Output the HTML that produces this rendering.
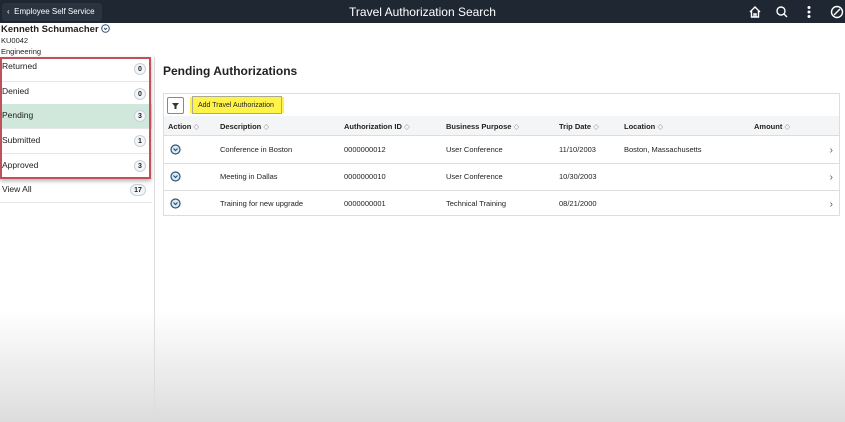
<!DOCTYPE html>
<html><head><meta charset="utf-8"><style>
*{margin:0;padding:0;box-sizing:border-box}
body{width:845px;height:422px;overflow:hidden;font-family:"Liberation Sans",sans-serif;color:#222;position:relative;background:linear-gradient(#fff 0,#fff 310px,#e8e8e8 385px,#dcdcdc 422px)}
.hdr{position:absolute;left:0;top:0;width:845px;height:23px;background:#1f2733;color:#fff}
.back{position:absolute;left:2px;top:3px;width:100px;height:18px;background:#2a3340;border-radius:3px;font-size:8px;line-height:18px;padding-left:5px}
.title{position:absolute;left:0;width:845px;text-align:center;top:5px;font-size:12px}
.user{position:absolute;left:1px;top:24px;font-size:9px;line-height:10px}
.side{position:absolute;left:0;top:57px;width:155px;height:365px;border-right:1px solid #ddd}
.it{position:absolute;left:0;width:152px;height:25px;font-size:8.5px;padding:4px 0 0 2px;border-bottom:1px solid #e6e6e6}
.bd{position:absolute;right:6px;top:6px;width:12px;height:12px;border-radius:50%;border:1px solid #c8d0d8;background:#f3f6f9;font-size:7px;text-align:center;line-height:11px;font-weight:bold}
.red{position:absolute;left:0;top:57px;width:151px;height:122px;border:2px solid #c0505a;box-shadow:0 2px 4px rgba(0,0,0,.3)}
h2{position:absolute;left:163px;top:64px;font-size:12px;font-weight:bold}
.tbl{position:absolute;left:163px;top:93px;width:677px;height:123px;border:1px solid #ddd;background:#fff}
.fb{position:absolute;left:3px;top:3px;width:17px;height:17px;border:1px solid #888;border-radius:2px}
.add{position:absolute;left:28px;top:2px;width:90px;height:18px;font-size:7px;line-height:18px;padding-left:5px;border:1px solid #aa9}
.hl{position:absolute;left:26px;top:3px;width:94px;height:16px;background:#fff34a}
.th{position:absolute;top:22px;left:0;width:100%;height:20px;background:#f4f5f6;font-size:7.5px;font-weight:bold;border-bottom:1px solid #ddd}
.th i{font-style:normal;font-weight:normal;color:#999}
.row{position:absolute;left:0;width:100%;height:27px;border-bottom:1px solid #ddd;font-size:7.5px}
.c{position:absolute;top:8px;white-space:nowrap}
.th .c{top:6px}
.ic{position:absolute;left:6px;top:7px}
.ch{position:absolute;right:6px;top:8px;font-size:10px;color:#555}
</style></head><body>
<div class="hdr"><div class="back">&lsaquo;&nbsp; Employee Self Service</div><div class="title">Travel Authorization Search</div>
<svg style="position:absolute;left:748px;top:5px" width="97" height="14" fill="none" stroke="#fff" stroke-width="1.4"><path d="M2 7L7 2L12 7M3.5 6V12H10.5V6M6 12V9H8V12"/><circle cx="33" cy="6" r="4"/><path d="M36 9L39 12"/><circle cx="61" cy="2.5" r=".8" fill="#fff"/><circle cx="61" cy="7" r=".8" fill="#fff"/><circle cx="61" cy="11.5" r=".8" fill="#fff"/><circle cx="89" cy="7" r="5.5"/><path d="M86 10L92 4"/></svg></div>
<div class="user"><b style="font-size:9.5px">Kenneth Schumacher</b> <svg width="9" height="9" style="vertical-align:-1px"><circle cx="4.5" cy="4.5" r="3.8" fill="none" stroke="#33506e"/><path d="M3 4L4.5 5.5L6 4" fill="none" stroke="#33506e"/></svg><br><span style="font-size:7.5px">KU0042<br>Engineering</span></div>
<div class="side">
<div class="it" style="top:0">Returned<div class="bd">0</div></div>
<div class="it" style="top:25px">Denied<div class="bd">0</div></div>
<div class="it" style="top:47px;background:#cfe8db;padding-top:6px">Pending<div class="bd">3</div></div>
<div class="it" style="top:72px;padding-top:6px">Submitted<div class="bd">1</div></div>
<div class="it" style="top:97px;padding-top:6px">Approved<div class="bd">3</div></div>
<div class="it" style="top:121px;padding-top:6px">View All<div class="bd" style="width:16px;border-radius:8px">17</div></div>
</div>
<div class="red"></div>
<h2>Pending Authorizations</h2>
<div class="tbl">
<div class="fb"><svg width="15" height="15"><path d="M4 5H11L8.5 8V11H6.5V8Z" fill="#333"/></svg></div>
<div class="hl"></div><div class="add">Add Travel Authorization</div>
<div class="th"><span class="c" style="left:4px">Action <i>◇</i></span><span class="c" style="left:56px">Description <i>◇</i></span><span class="c" style="left:180px">Authorization ID <i>◇</i></span><span class="c" style="left:282px">Business Purpose <i>◇</i></span><span class="c" style="left:395px">Trip Date <i>◇</i></span><span class="c" style="left:460px">Location <i>◇</i></span><span class="c" style="left:590px">Amount <i>◇</i></span></div>
<div class="row" style="top:43px"><svg class="ic" width="11" height="11"><circle cx="5.5" cy="5.5" r="4.5" fill="#d6ecf8" stroke="#33506e" stroke-width="1.2"/><path d="M3.5 4.5L5.5 6.5L7.5 4.5" fill="none" stroke="#33506e" stroke-width="1.2"/></svg><span class="c" style="left:56px">Conference in Boston</span><span class="c" style="left:180px">0000000012</span><span class="c" style="left:282px">User Conference</span><span class="c" style="left:395px">11/10/2003</span><span class="c" style="left:460px">Boston, Massachusetts</span><span class="ch">&rsaquo;</span></div>
<div class="row" style="top:70px"><svg class="ic" width="11" height="11"><circle cx="5.5" cy="5.5" r="4.5" fill="#d6ecf8" stroke="#33506e" stroke-width="1.2"/><path d="M3.5 4.5L5.5 6.5L7.5 4.5" fill="none" stroke="#33506e" stroke-width="1.2"/></svg><span class="c" style="left:56px">Meeting in Dallas</span><span class="c" style="left:180px">0000000010</span><span class="c" style="left:282px">User Conference</span><span class="c" style="left:395px">10/30/2003</span><span class="ch">&rsaquo;</span></div>
<div class="row" style="top:97px;border:0"><svg class="ic" width="11" height="11"><circle cx="5.5" cy="5.5" r="4.5" fill="#d6ecf8" stroke="#33506e" stroke-width="1.2"/><path d="M3.5 4.5L5.5 6.5L7.5 4.5" fill="none" stroke="#33506e" stroke-width="1.2"/></svg><span class="c" style="left:56px">Training for new upgrade</span><span class="c" style="left:180px">0000000001</span><span class="c" style="left:282px">Technical Training</span><span class="c" style="left:395px">08/21/2000</span><span class="ch">&rsaquo;</span></div>
</div>
</body></html>
